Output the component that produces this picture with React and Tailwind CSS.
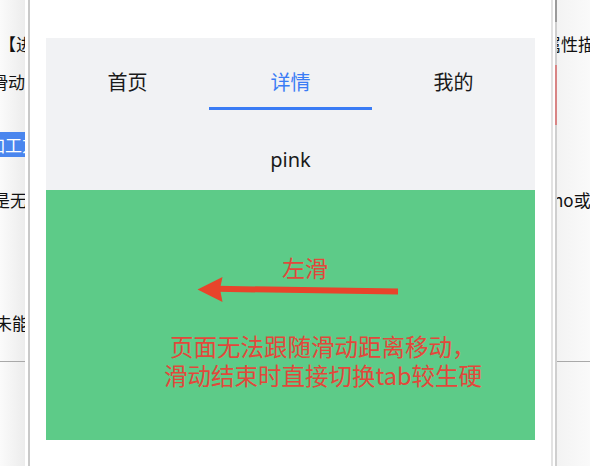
import React from "react";

const cjk = { fontFamily: '"Noto Sans CJK SC", "Noto Sans", sans-serif' };

function LeftStrip() {
  return (
    <div className="relative w-[25px] h-full overflow-hidden bg-gradient-to-r from-[#fbfbfb] to-[#ececec] text-[17px] leading-[20px] text-[#111]">
      <div className="h-[34px]" />
      <div className="whitespace-nowrap ml-[-1px]">【进阶</div>
      <div className="h-[18px]" />
      <div className="whitespace-nowrap ml-[-9px]">滑动切换</div>
      <div className="h-[40px]" />
      <div className="h-[25px] bg-[#4a86ee] text-white flex items-center whitespace-nowrap">
        <span className="ml-[-12px]">加工方法</span>
      </div>
      <div className="h-[33px]" />
      <div className="whitespace-nowrap ml-[-7px]">是无法</div>
      <div className="h-[103px]" />
      <div className="whitespace-nowrap ml-[-5px]">未能实现</div>
      <div className="h-[28px]" />
      <div className="h-[1px] bg-[#a9a9a9]" />
    </div>
  );
}

function RightStrip() {
  return (
    <div className="relative flex-1 h-full overflow-hidden bg-gradient-to-r from-[#f3f3f3] to-[#fafafa] text-[17px] leading-[20px] text-[#111]">
      <div className="h-[34px]" />
      <div className="whitespace-nowrap ml-[-13px]">属性描述</div>
      <div className="h-[136px]" />
      <div className="whitespace-nowrap ml-[-4px]">no或者</div>
      <div className="h-[151px]" />
      <div className="h-[1px] bg-[#a9a9a9]" />
    </div>
  );
}

function Tabs() {
  const tabs = ["首页", "详情", "我的"];
  return (
    <div className="flex h-[72px]">
      {tabs.map((t, i) => (
        <div key={t} className="flex-1 flex flex-col items-center">
          <div
            className={
              "pt-[30px] text-[20px] leading-[28px] " +
              (i === 1 ? "text-[#3a7cf5]" : "text-[#1a1a1a]")
            }
          >
            {t}
          </div>
          <div
            className={
              "mt-[11px] h-[3px] w-full " + (i === 1 ? "bg-[#3a7cf5]" : "")
            }
          />
        </div>
      ))}
    </div>
  );
}

function Arrow() {
  return (
    <svg width="208" height="28" viewBox="0 0 208 28" className="block ml-[149px]">
      <polygon points="22,8.8 203,11.5 203,17.5 22,14.8" fill="#e8442b" />
      <polygon points="2.5,12.5 27.5,0 25,12 27.5,25" fill="#e8442b" />
    </svg>
  );
}

export default function App() {
  return (
    <div className="w-[590px] h-[466px] flex overflow-hidden bg-white" style={cjk}>
      <LeftStrip />
      <div className="w-[5px] h-full bg-white flex justify-end">
        <div className="w-[2px] h-full bg-[#c9c9c9]" />
      </div>
      <div className="w-[521px] h-full bg-white flex flex-col px-[16px] pt-[38px]">
        <div className="bg-[#f1f2f4] flex flex-col">
          <Tabs />
          <div className="pt-[36px] pb-[16px] text-center text-[20px] leading-[28px] text-[#1a1a1a]" style={{ fontFamily: '"Noto Sans", sans-serif' }}>
            pink
          </div>
        </div>
        <div className="h-[250px] bg-[#5dcb88] flex flex-col text-[#e2483b]">
          <div className="pt-[67px] pl-[236px] text-[23px] leading-[20px]">左滑</div>
          <Arrow />
          <div className="mt-[27px] text-[23.5px] leading-[29px]">
            <div className="pl-[124px] whitespace-nowrap">页面无法跟随滑动距离移动，</div>
            <div className="pl-[118px] whitespace-nowrap">滑动结束时直接切换tab较生硬</div>
          </div>
        </div>
      </div>
      <div className="w-[6px] h-full flex">
        <div className="w-[2px] h-full bg-[#e2e2e2]" />
        <div className="w-[2px] h-full bg-white" />
        <div className="w-[2px] h-full bg-[#cfcfcf] flex flex-col">
          <div className="h-[22px] bg-[#9a9a9a]" />
          <div className="h-[43px]" />
          <div className="h-[60px] bg-[#d98585]" />
        </div>
      </div>
      <RightStrip />
    </div>
  );
}
